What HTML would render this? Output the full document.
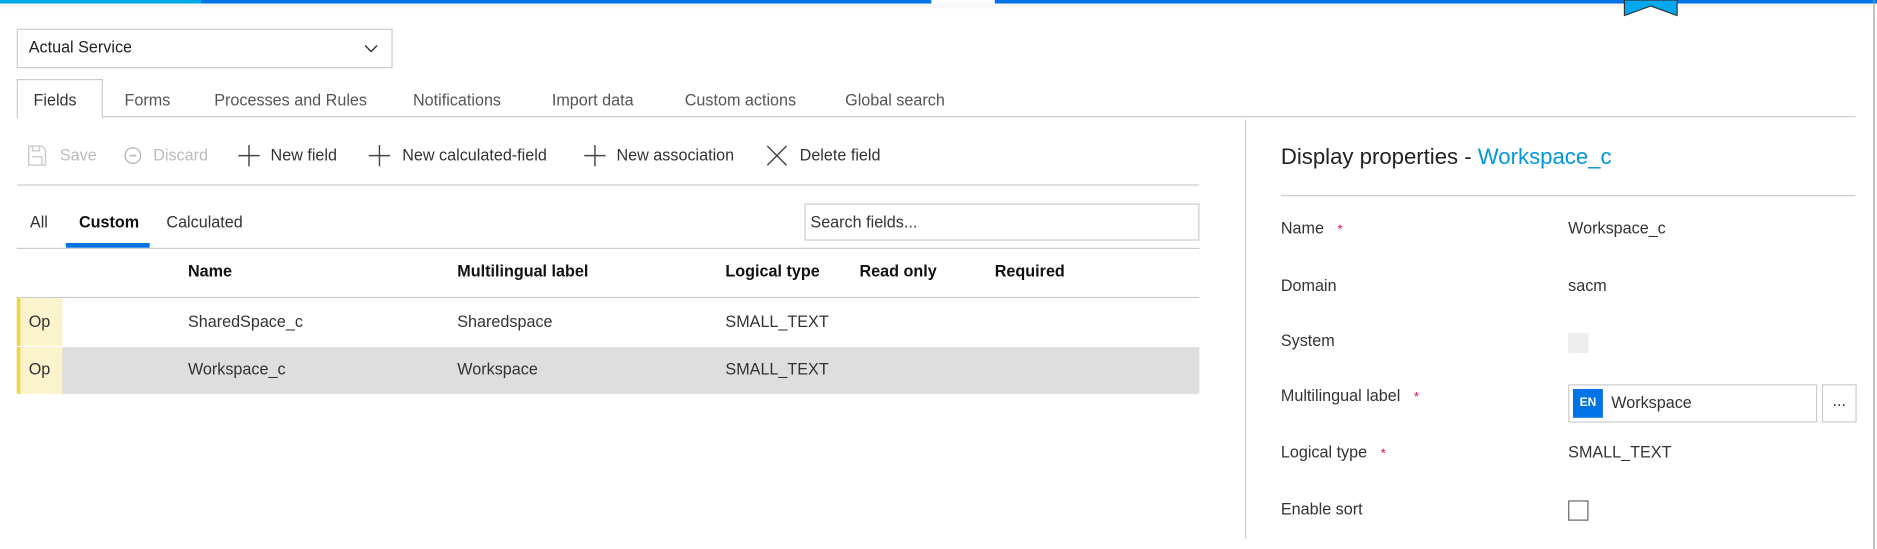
<!DOCTYPE html>
<html><head><meta charset="utf-8"><style>
html,body{margin:0;padding:0;width:1877px;height:549px;overflow:hidden;background:#fff}
#w{position:absolute;left:0;top:0;width:1568px;height:459px;transform:scale(1.19707);transform-origin:0 0;font-family:"Liberation Sans",sans-serif;font-size:13.5px;color:#333}
.a{position:absolute;white-space:nowrap}
.ln{position:absolute;background:#ccc;height:1px}
.b{font-weight:bold;color:#111}
.red{color:#e5004c;font-size:11px}
</style></head><body><div id="w">
<div class="a" style="left:0;top:0;width:1568px;height:3px;background:#0073e7"></div>
<div class="a" style="left:0;top:0;width:168px;height:3px;background:#00a9e7"></div>
<div class="a" style="left:778px;top:0;width:53px;height:3px;background:#fff"></div>
<div class="a" style="left:0;top:3px;width:1568px;height:4px;background:#f8f8f8"></div>
<svg class="a" style="left:1356px;top:0" width="46" height="14"><path d="M1 0H45V13L23 5L1 13Z" fill="#00a9ef" stroke="#333" stroke-width="1"/></svg>
<div class="a" style="left:1565px;top:0;width:1px;height:459px;background:#999"></div>

<div class="a" style="left:14px;top:24px;width:312px;height:31px;border:1px solid #ccc"></div>
<div class="a" style="left:24px;top:32px;color:#222">Actual Service</div>
<svg class="a" style="left:304px;top:37px" width="12" height="8"><path d="M1 1L6 6L11 1" fill="none" stroke="#333" stroke-width="1.2"/></svg>

<div class="ln" style="left:14px;top:97px;width:1536px"></div>
<div class="a" style="left:14px;top:66px;width:70px;height:32px;border:1px solid #ccc;border-bottom:none;background:#fff"></div>
<div class="a" style="left:28px;top:76px;color:#333">Fields</div>
<div class="a" style="left:104px;top:76px;color:#555">Forms</div>
<div class="a" style="left:179px;top:76px;color:#555">Processes and Rules</div>
<div class="a" style="left:345px;top:76px;color:#555">Notifications</div>
<div class="a" style="left:461px;top:76px;color:#555">Import data</div>
<div class="a" style="left:572px;top:76px;color:#555">Custom actions</div>
<div class="a" style="left:706px;top:76px;color:#555">Global search</div>

<div class="a" style="left:1040px;top:100px;width:1px;height:350px;background:#ccc"></div>

<svg class="a" style="left:22px;top:121px" width="18" height="18"><path d="M2 1H13L16 4V17H2Z M5 10H13V17 M5 1V5H11V1" fill="none" stroke="#ccc" stroke-width="1.2"/></svg>
<div class="a" style="left:50px;top:122px;color:#bbb">Save</div>
<svg class="a" style="left:103px;top:122px" width="16" height="16"><circle cx="8" cy="8" r="6.5" fill="none" stroke="#bbb" stroke-width="1.2"/><path d="M5 8H11" stroke="#bbb" stroke-width="1.5"/></svg>
<div class="a" style="left:128px;top:122px;color:#bbb">Discard</div>
<svg class="a" style="left:199px;top:121px" width="18" height="18"><path d="M9 0V18M0 9H18" stroke="#444" stroke-width="1.2"/></svg>
<div class="a" style="left:226px;top:122px">New field</div>
<svg class="a" style="left:308px;top:121px" width="18" height="18"><path d="M9 0V18M0 9H18" stroke="#444" stroke-width="1.2"/></svg>
<div class="a" style="left:336px;top:122px">New calculated-field</div>
<svg class="a" style="left:488px;top:121px" width="18" height="18"><path d="M9 0V18M0 9H18" stroke="#444" stroke-width="1.2"/></svg>
<div class="a" style="left:515px;top:122px">New association</div>
<svg class="a" style="left:640px;top:121px" width="18" height="18"><path d="M1 1L17 17M17 1L1 17" stroke="#444" stroke-width="1.2"/></svg>
<div class="a" style="left:668px;top:122px">Delete field</div>
<div class="ln" style="left:14px;top:154px;width:988px"></div>

<div class="a" style="left:25px;top:178px">All</div>
<div class="a b" style="left:66px;top:178px">Custom</div>
<div class="a" style="left:55px;top:203px;width:70px;height:4px;background:#0073e7"></div>
<div class="a" style="left:139px;top:178px">Calculated</div>
<div class="a" style="left:672px;top:170px;width:328px;height:29px;border:1px solid #ccc"></div>
<div class="a" style="left:677px;top:178px;color:#333">Search fields...</div>
<div class="ln" style="left:14px;top:207px;width:988px"></div>

<div class="a b" style="left:157px;top:219px">Name</div>
<div class="a b" style="left:382px;top:219px">Multilingual label</div>
<div class="a b" style="left:606px;top:219px">Logical type</div>
<div class="a b" style="left:718px;top:219px">Read only</div>
<div class="a b" style="left:831px;top:219px">Required</div>
<div class="ln" style="left:14px;top:248px;width:988px"></div>

<div class="a" style="left:14px;top:249px;width:38px;height:40px;background:#faf3cc;border-left:3px solid #f2d543;box-sizing:border-box"></div>
<div class="a" style="left:24px;top:261px">Op</div>
<div class="a" style="left:157px;top:261px">SharedSpace_c</div>
<div class="a" style="left:382px;top:261px">Sharedspace</div>
<div class="a" style="left:606px;top:261px">SMALL_TEXT</div>
<div class="a" style="left:14px;top:290px;width:988px;height:39px;background:#dedede"></div>
<div class="a" style="left:14px;top:290px;width:38px;height:39px;background:#faf3cc;border-left:3px solid #f2d543;box-sizing:border-box"></div>
<div class="a" style="left:24px;top:301px">Op</div>
<div class="a" style="left:157px;top:301px">Workspace_c</div>
<div class="a" style="left:382px;top:301px">Workspace</div>
<div class="a" style="left:606px;top:301px">SMALL_TEXT</div>

<div class="a" style="left:1070px;top:120px;font-size:18.5px;color:#222">Display properties - <span style="color:#0096db">Workspace_c</span></div>
<div class="ln" style="left:1070px;top:163px;width:480px"></div>
<div class="a" style="left:1070px;top:183px">Name &nbsp;&nbsp;<span class="red">*</span></div>
<div class="a" style="left:1310px;top:183px">Workspace_c</div>
<div class="a" style="left:1070px;top:231px">Domain</div>
<div class="a" style="left:1310px;top:231px">sacm</div>
<div class="a" style="left:1070px;top:277px">System</div>
<div class="a" style="left:1310px;top:278px;width:17px;height:17px;background:#eee"></div>
<div class="a" style="left:1070px;top:323px">Multilingual label &nbsp;&nbsp;<span class="red">*</span></div>
<div class="a" style="left:1310px;top:321px;width:206px;height:30px;border:1px solid #ccc"></div>
<div class="a" style="left:1314px;top:325px;width:25px;height:24px;background:#0073e7;color:#fff;font-size:10px;font-weight:bold;text-align:center;line-height:24px">EN</div>
<div class="a" style="left:1346px;top:329px">Workspace</div>
<div class="a" style="left:1522px;top:321px;width:27px;height:30px;border:1px solid #ccc;text-align:center;line-height:26px">...</div>
<div class="a" style="left:1070px;top:370px">Logical type &nbsp;&nbsp;<span class="red">*</span></div>
<div class="a" style="left:1310px;top:370px">SMALL_TEXT</div>
<div class="a" style="left:1070px;top:418px">Enable sort</div>
<div class="a" style="left:1310px;top:418px;width:15px;height:15px;border:1px solid #666"></div>
</div></body></html>
